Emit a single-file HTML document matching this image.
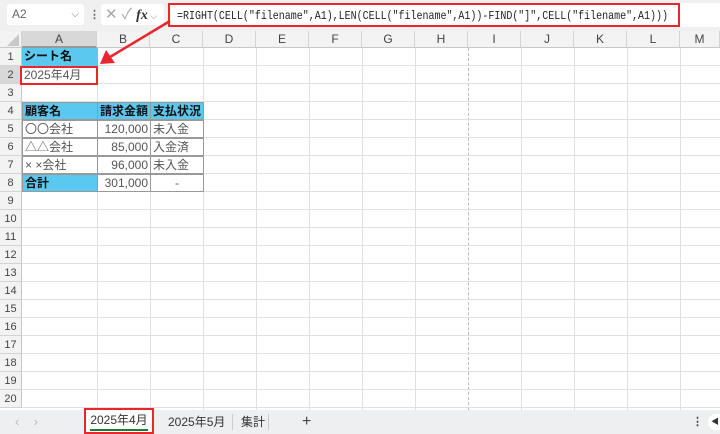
<!DOCTYPE html><html><head><meta charset="utf-8"><style>
*{margin:0;padding:0;box-sizing:border-box}
body{width:720px;height:434px;overflow:hidden;background:#fff;position:relative;font-family:"Liberation Sans","Noto Sans CJK JP",sans-serif;font-size:12px;color:#222}
.a{position:absolute}
.ch{position:absolute;top:31px;height:17px;border-right:1px solid #d4d4d4;border-bottom:1px solid #c8c8c8;background:#f3f3f3;text-align:center;line-height:17px;color:#444;font-size:12px}
.rh{position:absolute;left:0;width:22px;height:18px;border-bottom:1px solid #d4d4d4;border-right:1px solid #c8c8c8;background:#f3f3f3;text-align:center;line-height:18px;color:#444;font-size:11px}
.vl{position:absolute;top:48px;height:362px;width:1px;background:#e1e1e1}
.hl{position:absolute;left:22px;width:698px;height:1px;background:#e1e1e1}
.c{position:absolute;height:18px;line-height:17px;padding:0 2px;font-size:12px;color:#555;border:1px solid #999;margin:-0px}
.bl{background:#5bc8ef;color:#111;font-weight:bold}
.r{text-align:right}
</style></head><body>
<div class="a" style="left:0;top:0;width:720px;height:31px;background:#f0f0f0"></div>
<div class="a" style="left:7px;top:4px;width:77px;height:21px;background:#fff;border-radius:3px;line-height:21px;padding-left:5px;color:#666;font-size:12px">A2<span style="position:absolute;right:5px;color:#777;font-size:10px">⌵</span></div>
<div class="a" style="left:89px;top:8px;color:#666;font-weight:bold;font-size:11px">⋮</div>
<div class="a" style="left:101px;top:4px;width:63px;height:21px;background:#fff;border-radius:3px;line-height:21px;color:#aaa;font-size:15px;padding-left:4px;white-space:nowrap">✕ ✓ <i style="font-family:'Liberation Serif',serif;color:#333;font-weight:bold;font-size:14px">fx</i><span style="font-size:9px;color:#888"> ⌵</span></div>
<div class="a" style="left:168px;top:3px;width:512px;height:24px;background:#fff;border:2.5px solid #e8262c;overflow:hidden"><svg width="508" height="20" style="position:absolute;left:0;top:0"><text x="7" y="14" font-family="Liberation Mono, monospace" font-size="12" fill="#222" textLength="491" lengthAdjust="spacingAndGlyphs">=RIGHT(CELL("filename",A1),LEN(CELL("filename",A1))-FIND("]",CELL("filename",A1)))</text></svg></div>
<div class="a" style="left:680px;top:3px;width:40px;height:24px;background:#fff"></div>
<div class="ch" style="left:0;width:22px;background:#f3f3f3"><svg width="20" height="16" style="position:absolute;left:2px;top:0"><polygon points="17,3 17,15 5,15" fill="#c8c8c8"/></svg></div>
<div class="ch" style="left:22px;width:75px;background:#d8d8d8;border-bottom:2px solid #999">A</div>
<div class="ch" style="left:97px;width:53px">B</div>
<div class="ch" style="left:150px;width:53px">C</div>
<div class="ch" style="left:203px;width:53px">D</div>
<div class="ch" style="left:256px;width:53px">E</div>
<div class="ch" style="left:309px;width:53px">F</div>
<div class="ch" style="left:362px;width:53px">G</div>
<div class="ch" style="left:415px;width:53px">H</div>
<div class="ch" style="left:468px;width:53px">I</div>
<div class="ch" style="left:521px;width:53px">J</div>
<div class="ch" style="left:574px;width:53px">K</div>
<div class="ch" style="left:627px;width:53px">L</div>
<div class="ch" style="left:680px;width:40px">M</div>
<div class="vl" style="left:97px"></div><div class="vl" style="left:150px"></div><div class="vl" style="left:203px"></div><div class="vl" style="left:256px"></div><div class="vl" style="left:309px"></div><div class="vl" style="left:362px"></div><div class="vl" style="left:415px"></div>
<div class="vl" style="left:468px;background:none;border-left:1px dashed #bbb"></div>
<div class="vl" style="left:521px"></div><div class="vl" style="left:574px"></div><div class="vl" style="left:627px"></div><div class="vl" style="left:680px"></div>
<div class="hl" style="top:65px"></div><div class="hl" style="top:83px"></div><div class="hl" style="top:101px"></div><div class="hl" style="top:119px"></div><div class="hl" style="top:137px"></div><div class="hl" style="top:155px"></div><div class="hl" style="top:173px"></div><div class="hl" style="top:191px"></div><div class="hl" style="top:209px"></div><div class="hl" style="top:227px"></div><div class="hl" style="top:245px"></div><div class="hl" style="top:263px"></div><div class="hl" style="top:281px"></div><div class="hl" style="top:299px"></div><div class="hl" style="top:317px"></div><div class="hl" style="top:335px"></div><div class="hl" style="top:353px"></div><div class="hl" style="top:371px"></div><div class="hl" style="top:389px"></div><div class="hl" style="top:407px"></div>
<div class="rh" style="top:48px">1</div><div class="rh" style="top:66px;background:#d8d8d8">2</div><div class="rh" style="top:84px">3</div><div class="rh" style="top:102px">4</div><div class="rh" style="top:120px">5</div><div class="rh" style="top:138px">6</div><div class="rh" style="top:156px">7</div><div class="rh" style="top:174px">8</div><div class="rh" style="top:192px">9</div><div class="rh" style="top:210px">10</div><div class="rh" style="top:228px">11</div><div class="rh" style="top:246px">12</div><div class="rh" style="top:264px">13</div><div class="rh" style="top:282px">14</div><div class="rh" style="top:300px">15</div><div class="rh" style="top:318px">16</div><div class="rh" style="top:336px">17</div><div class="rh" style="top:354px">18</div><div class="rh" style="top:372px">19</div><div class="rh" style="top:390px">20</div>
<div class="c bl" style="left:22px;top:48px;width:76px;border:none">シート名</div>
<div class="a" style="left:20px;top:66px;width:78px;height:19px;border:2.5px solid #e8262c;line-height:14px;padding-left:2px;color:#555">2025年4月</div>
<div class="c bl" style="left:22px;top:102px;width:76px">顧客名</div>
<div class="c bl" style="left:97px;top:102px;width:54px">請求金額</div>
<div class="c bl" style="left:150px;top:102px;width:54px">支払状況</div>
<div class="c" style="left:22px;top:120px;width:76px">〇〇会社</div><div class="c r" style="left:97px;top:120px;width:54px">120,000</div><div class="c" style="left:150px;top:120px;width:54px">未入金</div>
<div class="c" style="left:22px;top:138px;width:76px">△△会社</div><div class="c r" style="left:97px;top:138px;width:54px">85,000</div><div class="c" style="left:150px;top:138px;width:54px">入金済</div>
<div class="c" style="left:22px;top:156px;width:76px">× ×会社</div><div class="c r" style="left:97px;top:156px;width:54px">96,000</div><div class="c" style="left:150px;top:156px;width:54px">未入金</div>
<div class="c bl" style="left:22px;top:174px;width:76px">合計</div><div class="c r" style="left:97px;top:174px;width:54px">301,000</div><div class="c" style="left:150px;top:174px;width:54px;text-align:center">-</div>
<svg class="a" style="left:0;top:0" width="720" height="120"><line x1="170" y1="21" x2="110" y2="57" stroke="#e8262c" stroke-width="2.5"/><polygon points="100,64 106,50 115,63" fill="#e8262c"/></svg>
<div class="a" style="left:0;top:410px;width:720px;height:24px;background:#eeeff1"></div>
<div class="a" style="left:15px;top:414px;color:#bbb;font-size:13px">‹ &nbsp;&nbsp; ›</div>
<div class="a" style="left:84px;top:408px;width:70px;height:26px;border:2.5px solid #e8262c;background:#fff;text-align:center;line-height:20px;color:#333">2025年4月<div style="position:absolute;left:4px;right:4px;bottom:1px;height:2px;background:#1e7b34"></div></div>
<div class="a" style="left:168px;top:410px;line-height:24px;color:#333">2025年5月</div>
<div class="a" style="left:232px;top:414px;width:1px;height:16px;background:#ccc"></div>
<div class="a" style="left:241px;top:410px;line-height:24px;color:#333">集計</div>
<div class="a" style="left:268px;top:414px;width:1px;height:16px;background:#ccc"></div>
<div class="a" style="left:302px;top:410px;line-height:24px;color:#444;font-size:16px">+</div>
<div class="a" style="left:692px;top:415px;color:#444;font-weight:bold;font-size:11px">⋮</div>
<div class="a" style="left:708px;top:414px;width:12px;height:16px;border-radius:8px 0 0 8px;background:#fff;font-size:8px;line-height:16px;padding-left:3px;color:#333;overflow:hidden">◀</div>
</body></html>
